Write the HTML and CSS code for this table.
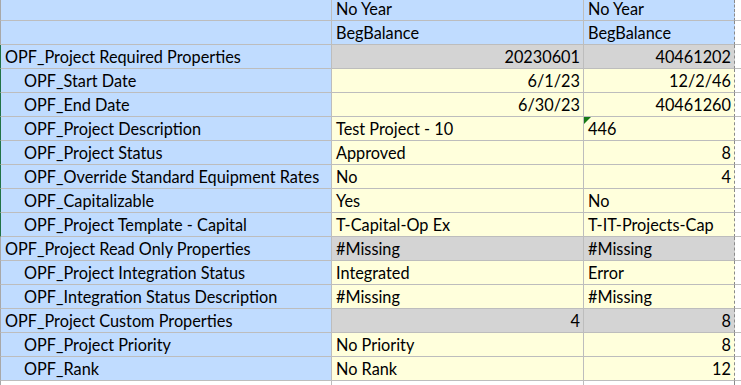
FILE: index.html
```html
<!DOCTYPE html>
<html>
<head>
<meta charset="utf-8">
<link rel="stylesheet" href="styles.css">
</head>
<body>
<div class="sheet">
  <div class="row first">
    <div class="c a mem"></div><div class="c b mem">No Year</div><div class="c cc mem">No Year</div><div class="c d"></div>
  </div>
  <div class="row">
    <div class="c a mem"></div><div class="c b mem">BegBalance</div><div class="c cc mem">BegBalance</div><div class="c d"></div>
  </div>
  <div class="row">
    <div class="c a mem sel">OPF_Project Required Properties</div><div class="c b gray num">20230601</div><div class="c cc gray num">40461202</div><div class="c d"></div>
  </div>
  <div class="row">
    <div class="c a mem sel ind">OPF_Start Date</div><div class="c b yel num">6/1/23</div><div class="c cc yel num">12/2/46</div><div class="c d"></div>
  </div>
  <div class="row">
    <div class="c a mem sel ind">OPF_End Date</div><div class="c b yel num">6/30/23</div><div class="c cc yel num">40461260</div><div class="c d"></div>
  </div>
  <div class="row">
    <div class="c a mem sel ind">OPF_Project Description</div><div class="c b yel">Test Project - 10</div><div class="c cc yel flag">446</div><div class="c d"></div>
  </div>
  <div class="row">
    <div class="c a mem sel ind">OPF_Project Status</div><div class="c b yel">Approved</div><div class="c cc yel num">8</div><div class="c d"></div>
  </div>
  <div class="row">
    <div class="c a mem sel ind">OPF_Override Standard Equipment Rates</div><div class="c b yel">No</div><div class="c cc yel num">4</div><div class="c d"></div>
  </div>
  <div class="row">
    <div class="c a mem sel ind">OPF_Capitalizable</div><div class="c b yel">Yes</div><div class="c cc yel">No</div><div class="c d"></div>
  </div>
  <div class="row">
    <div class="c a mem sel ind">OPF_Project Template - Capital</div><div class="c b yel">T-Capital-Op Ex</div><div class="c cc yel">T-IT-Projects-Cap</div><div class="c d"></div>
  </div>
  <div class="row">
    <div class="c a mem">OPF_Project Read Only Properties</div><div class="c b gray">#Missing</div><div class="c cc gray">#Missing</div><div class="c d"></div>
  </div>
  <div class="row">
    <div class="c a mem ind">OPF_Project Integration Status</div><div class="c b yel">Integrated</div><div class="c cc yel">Error</div><div class="c d"></div>
  </div>
  <div class="row">
    <div class="c a mem ind">OPF_Integration Status Description</div><div class="c b yel">#Missing</div><div class="c cc yel">#Missing</div><div class="c d"></div>
  </div>
  <div class="row">
    <div class="c a mem">OPF_Project Custom Properties</div><div class="c b gray num">4</div><div class="c cc gray num">8</div><div class="c d"></div>
  </div>
  <div class="row">
    <div class="c a mem ind">OPF_Project Priority</div><div class="c b yel">No Priority</div><div class="c cc yel num">8</div><div class="c d"></div>
  </div>
  <div class="row">
    <div class="c a mem ind">OPF_Rank</div><div class="c b yel">No Rank</div><div class="c cc yel num">12</div><div class="c d"></div>
  </div>
  <div class="row last">
    <div class="c a"></div><div class="c b"></div><div class="c cc"></div><div class="c d"></div>
  </div>
</div>
</body>
</html>
```

FILE: styles.css
```css
html, body {
  margin: 0;
  padding: 0;
  background: #ffffff;
}
body {
  font-family: Lato, "Liberation Sans", sans-serif;
  font-size: 16.3px;
  color: #000000;
  overflow: hidden;
  height: 385px;
}
.sheet {
  display: flex;
  flex-direction: column;
  width: 741px;
}
.row {
  display: grid;
  grid-template-columns: 332px 252px 151px 1fr;
  height: 24px;
}
.row.first {
  height: 21px;
}
.row.last {
  height: 4px;
}
.c {
  border-bottom: 1px solid #bdbdbd;
  border-right: 1px solid #bdbdbd;
  padding: 3px 3px 0 4px;
  line-height: 18px;
  white-space: nowrap;
  overflow: hidden;
  position: relative;
  background: #ffffff;
}
.row.first .c {
  padding-top: 0;
}
.row.last .c {
  padding: 0;
  border-bottom: none;
}
.a {
  border-left: 1px solid #a8a8a8;
}
.a.sel {
  border-left-color: #217346;
}
.cc {
  border-right: 1px dashed #8a8a8a;
}
.d {
  border-right: none;
  background: #ffffff;
}
.mem {
  background: #c0dcff;
}
.gray {
  background: #d4d4d4;
}
.yel {
  background: #ffffdc;
}
.num {
  text-align: right;
}
.ind {
  padding-left: 23px;
}
.flag::before {
  content: "";
  position: absolute;
  left: 0;
  top: 0;
  width: 7px;
  height: 7px;
  background: #167a16;
  clip-path: polygon(0 0, 100% 0, 0 100%);
}
```
